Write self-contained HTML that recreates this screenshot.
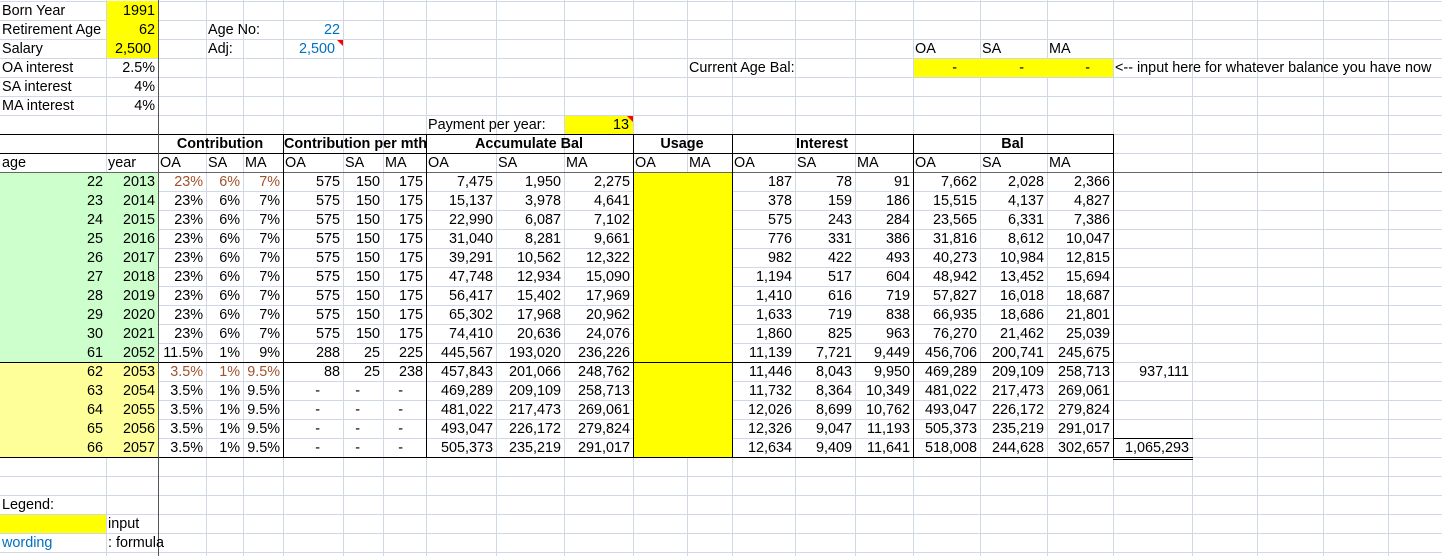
<!DOCTYPE html>
<html><head><meta charset="utf-8"><style>
*{margin:0;padding:0}
body{width:1442px;height:556px;overflow:hidden;position:relative;background:#fff;font-family:"Liberation Sans",Arial,sans-serif;font-size:14.4px;color:#000}
#grid{position:absolute;left:0;top:0;width:1442px;height:556px;background:repeating-linear-gradient(to bottom,#d0d7e5 0,#d0d7e5 1px,transparent 1px,transparent 19px);background-position:0 1px}
.v{position:absolute;top:0;height:556px;width:1px;background:#d0d7e5}
.f{position:absolute}
.b{position:absolute;background:#000}
.r{position:absolute;left:0;height:19px;line-height:19px;display:flex;white-space:nowrap;transform:translateY(1px)}
.r>span{flex:none;box-sizing:border-box;padding:0 3px 0 2px;text-align:right}
.L{text-align:left!important}
.C{text-align:center!important}
.D{padding-right:23px!important}
.B{font-weight:bold}
.br{color:#a0522d}
.bl{color:#0070c0}
.w0{width:106px}.w1{width:52px}.w2{width:48px}.w3{width:37px}.w4{width:40px}.w5{width:60px}.w6{width:40px}.w7{width:43px}.w8{width:70px}.w9{width:68px}.w10{width:69px}.w11{width:54px}.w12{width:45px}.w13{width:63px}.w14{width:60px}.w15{width:58px}.w16{width:67px}.w17{width:67px}.w18{width:66px}.w19{width:79px}
.tri{position:absolute;width:0;height:0;border-left:6px solid transparent;border-top:6px solid #f00}
</style></head><body>
<div id="grid"></div>
<div class="v" style="left:106px"></div><div class="v" style="left:206px"></div><div class="v" style="left:243px"></div><div class="v" style="left:283px"></div><div class="v" style="left:343px"></div><div class="v" style="left:383px"></div><div class="v" style="left:426px"></div><div class="v" style="left:496px"></div><div class="v" style="left:564px"></div><div class="v" style="left:633px"></div><div class="v" style="left:687px"></div><div class="v" style="left:732px"></div><div class="v" style="left:795px"></div><div class="v" style="left:855px"></div><div class="v" style="left:913px"></div><div class="v" style="left:980px"></div><div class="v" style="left:1047px"></div><div class="v" style="left:1113px"></div><div class="v" style="left:1192px"></div><div class="v" style="left:1257px"></div><div class="v" style="left:1323px"></div><div class="v" style="left:1388px"></div>

<div class="f" style="left:107px;top:1px;width:51px;height:57px;background:#ffff00"></div>
<div class="f" style="left:565px;top:116px;width:68px;height:18px;background:#ffff00"></div>
<div class="f" style="left:634px;top:173px;width:98px;height:284px;background:#ffff00"></div>
<div class="f" style="left:914px;top:59px;width:199px;height:18px;background:#ffff00"></div>
<div class="f" style="left:0;top:515px;width:106px;height:18px;background:#ffff00"></div>
<div class="f" style="left:0;top:173px;width:158px;height:189px;background:#ccffcc"></div>
<div class="f" style="left:0;top:363px;width:158px;height:94px;background:#ffff99"></div>

<div class="b" style="left:0;top:134px;width:1113px;height:1px"></div>
<div class="b" style="left:0;top:153px;width:1113px;height:1px"></div>
<div class="b" style="left:0;top:172px;width:1442px;height:1px;background:#666"></div>
<div class="b" style="left:0;top:362px;width:1113px;height:1px"></div>
<div class="b" style="left:0;top:457px;width:1113px;height:1px"></div>
<div class="b" style="left:158px;top:0;width:1px;height:556px;background:#555"></div>
<div class="b" style="left:283px;top:134px;width:1px;height:324px"></div>
<div class="b" style="left:426px;top:134px;width:1px;height:324px"></div>
<div class="b" style="left:633px;top:134px;width:1px;height:324px"></div>
<div class="b" style="left:732px;top:134px;width:1px;height:324px"></div>
<div class="b" style="left:913px;top:134px;width:1px;height:324px"></div>
<div class="b" style="left:1113px;top:134px;width:1px;height:324px"></div>
<div class="b" style="left:1113px;top:438px;width:80px;height:1px"></div>
<div class="b" style="left:1113px;top:457px;width:80px;height:1px"></div>
<div class="b" style="left:1113px;top:459px;width:80px;height:1px"></div>
<div class="tri" style="left:337px;top:40px"></div>
<div class="tri" style="left:627px;top:116px"></div>

<div class="r" style="top:1px"><span class="w0 L">Born Year</span><span class="w1">1991</span></div>
<div class="r" style="top:20px"><span class="w0 L">Retirement Age</span><span class="w1">62</span><span class="w2"></span><span class="w3 L" style="width:77px">Age No:</span><span class="w5 bl">22</span></div>
<div class="r" style="top:39px"><span class="w0 L">Salary</span><span class="w1" style="padding-right:7px">2,500</span><span class="w2"></span><span class="w3 L" style="width:77px">Adj:</span><span class="w5 bl" style="padding-right:8px">2,500</span></div>
<div class="r" style="top:39px;left:913px"><span class="w16 L">OA</span><span class="w17 L">SA</span><span class="w18 L">MA</span></div>
<div class="r" style="top:58px"><span class="w0 L">OA interest</span><span class="w1">2.5%</span></div>
<div class="r" style="top:58px;left:687px"><span class="L" style="width:226px">Current Age Bal:</span><span class="w16 D">-</span><span class="w17 D">-</span><span class="w18 D">-</span><span class="L">&lt;-- input here for whatever balance you have now</span></div>
<div class="r" style="top:77px"><span class="w0 L">SA interest</span><span class="w1">4%</span></div>
<div class="r" style="top:96px"><span class="w0 L">MA interest</span><span class="w1">4%</span></div>
<div class="r" style="top:115px;left:426px"><span class="L" style="width:138px">Payment per year:</span><span class="w10" style="padding-right:4px">13</span></div>
<div class="r B" style="top:134px;left:158px"><span class="C" style="width:125px">Contribution</span><span class="L" style="width:143px;overflow:hidden;padding-left:1px">Contribution per mth</span><span class="C" style="width:207px">Accumulate Bal</span><span class="C" style="width:99px">Usage</span><span class="C" style="width:181px">Interest</span><span class="C" style="width:200px">Bal</span></div>
<div class="r" style="top:153px"><span class="w0 L">age</span><span class="w1 L">year</span><span class="w2 L">OA</span><span class="w3 L">SA</span><span class="w4 L">MA</span><span class="w5 L">OA</span><span class="w6 L">SA</span><span class="w7 L">MA</span><span class="w8 L">OA</span><span class="w9 L">SA</span><span class="w10 L">MA</span><span class="w11 L">OA</span><span class="w12 L">MA</span><span class="w13 L">OA</span><span class="w14 L">SA</span><span class="w15 L">MA</span><span class="w16 L">OA</span><span class="w17 L">SA</span><span class="w18 L">MA</span></div>

<div class="r" style="top:172px"><span class="w0">22</span><span class="w1">2013</span><span class="w2 br">23%</span><span class="w3 br">6%</span><span class="w4 br">7%</span><span class="w5">575</span><span class="w6">150</span><span class="w7">175</span><span class="w8">7,475</span><span class="w9">1,950</span><span class="w10">2,275</span><span class="w11"></span><span class="w12"></span><span class="w13">187</span><span class="w14">78</span><span class="w15">91</span><span class="w16">7,662</span><span class="w17">2,028</span><span class="w18">2,366</span></div>
<div class="r" style="top:191px"><span class="w0">23</span><span class="w1">2014</span><span class="w2">23%</span><span class="w3">6%</span><span class="w4">7%</span><span class="w5">575</span><span class="w6">150</span><span class="w7">175</span><span class="w8">15,137</span><span class="w9">3,978</span><span class="w10">4,641</span><span class="w11"></span><span class="w12"></span><span class="w13">378</span><span class="w14">159</span><span class="w15">186</span><span class="w16">15,515</span><span class="w17">4,137</span><span class="w18">4,827</span></div>
<div class="r" style="top:210px"><span class="w0">24</span><span class="w1">2015</span><span class="w2">23%</span><span class="w3">6%</span><span class="w4">7%</span><span class="w5">575</span><span class="w6">150</span><span class="w7">175</span><span class="w8">22,990</span><span class="w9">6,087</span><span class="w10">7,102</span><span class="w11"></span><span class="w12"></span><span class="w13">575</span><span class="w14">243</span><span class="w15">284</span><span class="w16">23,565</span><span class="w17">6,331</span><span class="w18">7,386</span></div>
<div class="r" style="top:229px"><span class="w0">25</span><span class="w1">2016</span><span class="w2">23%</span><span class="w3">6%</span><span class="w4">7%</span><span class="w5">575</span><span class="w6">150</span><span class="w7">175</span><span class="w8">31,040</span><span class="w9">8,281</span><span class="w10">9,661</span><span class="w11"></span><span class="w12"></span><span class="w13">776</span><span class="w14">331</span><span class="w15">386</span><span class="w16">31,816</span><span class="w17">8,612</span><span class="w18">10,047</span></div>
<div class="r" style="top:248px"><span class="w0">26</span><span class="w1">2017</span><span class="w2">23%</span><span class="w3">6%</span><span class="w4">7%</span><span class="w5">575</span><span class="w6">150</span><span class="w7">175</span><span class="w8">39,291</span><span class="w9">10,562</span><span class="w10">12,322</span><span class="w11"></span><span class="w12"></span><span class="w13">982</span><span class="w14">422</span><span class="w15">493</span><span class="w16">40,273</span><span class="w17">10,984</span><span class="w18">12,815</span></div>
<div class="r" style="top:267px"><span class="w0">27</span><span class="w1">2018</span><span class="w2">23%</span><span class="w3">6%</span><span class="w4">7%</span><span class="w5">575</span><span class="w6">150</span><span class="w7">175</span><span class="w8">47,748</span><span class="w9">12,934</span><span class="w10">15,090</span><span class="w11"></span><span class="w12"></span><span class="w13">1,194</span><span class="w14">517</span><span class="w15">604</span><span class="w16">48,942</span><span class="w17">13,452</span><span class="w18">15,694</span></div>
<div class="r" style="top:286px"><span class="w0">28</span><span class="w1">2019</span><span class="w2">23%</span><span class="w3">6%</span><span class="w4">7%</span><span class="w5">575</span><span class="w6">150</span><span class="w7">175</span><span class="w8">56,417</span><span class="w9">15,402</span><span class="w10">17,969</span><span class="w11"></span><span class="w12"></span><span class="w13">1,410</span><span class="w14">616</span><span class="w15">719</span><span class="w16">57,827</span><span class="w17">16,018</span><span class="w18">18,687</span></div>
<div class="r" style="top:305px"><span class="w0">29</span><span class="w1">2020</span><span class="w2">23%</span><span class="w3">6%</span><span class="w4">7%</span><span class="w5">575</span><span class="w6">150</span><span class="w7">175</span><span class="w8">65,302</span><span class="w9">17,968</span><span class="w10">20,962</span><span class="w11"></span><span class="w12"></span><span class="w13">1,633</span><span class="w14">719</span><span class="w15">838</span><span class="w16">66,935</span><span class="w17">18,686</span><span class="w18">21,801</span></div>
<div class="r" style="top:324px"><span class="w0">30</span><span class="w1">2021</span><span class="w2">23%</span><span class="w3">6%</span><span class="w4">7%</span><span class="w5">575</span><span class="w6">150</span><span class="w7">175</span><span class="w8">74,410</span><span class="w9">20,636</span><span class="w10">24,076</span><span class="w11"></span><span class="w12"></span><span class="w13">1,860</span><span class="w14">825</span><span class="w15">963</span><span class="w16">76,270</span><span class="w17">21,462</span><span class="w18">25,039</span></div>
<div class="r" style="top:343px"><span class="w0">61</span><span class="w1">2052</span><span class="w2">11.5%</span><span class="w3">1%</span><span class="w4">9%</span><span class="w5">288</span><span class="w6">25</span><span class="w7">225</span><span class="w8">445,567</span><span class="w9">193,020</span><span class="w10">236,226</span><span class="w11"></span><span class="w12"></span><span class="w13">11,139</span><span class="w14">7,721</span><span class="w15">9,449</span><span class="w16">456,706</span><span class="w17">200,741</span><span class="w18">245,675</span></div>
<div class="r" style="top:362px"><span class="w0">62</span><span class="w1">2053</span><span class="w2 br">3.5%</span><span class="w3 br">1%</span><span class="w4 br">9.5%</span><span class="w5">88</span><span class="w6">25</span><span class="w7">238</span><span class="w8">457,843</span><span class="w9">201,066</span><span class="w10">248,762</span><span class="w11"></span><span class="w12"></span><span class="w13">11,446</span><span class="w14">8,043</span><span class="w15">9,950</span><span class="w16">469,289</span><span class="w17">209,109</span><span class="w18">258,713</span><span class="w19">937,111</span></div>
<div class="r" style="top:381px"><span class="w0">63</span><span class="w1">2054</span><span class="w2">3.5%</span><span class="w3">1%</span><span class="w4">9.5%</span><span class="w5 D">-</span><span class="w6 D">-</span><span class="w7 D">-</span><span class="w8">469,289</span><span class="w9">209,109</span><span class="w10">258,713</span><span class="w11"></span><span class="w12"></span><span class="w13">11,732</span><span class="w14">8,364</span><span class="w15">10,349</span><span class="w16">481,022</span><span class="w17">217,473</span><span class="w18">269,061</span></div>
<div class="r" style="top:400px"><span class="w0">64</span><span class="w1">2055</span><span class="w2">3.5%</span><span class="w3">1%</span><span class="w4">9.5%</span><span class="w5 D">-</span><span class="w6 D">-</span><span class="w7 D">-</span><span class="w8">481,022</span><span class="w9">217,473</span><span class="w10">269,061</span><span class="w11"></span><span class="w12"></span><span class="w13">12,026</span><span class="w14">8,699</span><span class="w15">10,762</span><span class="w16">493,047</span><span class="w17">226,172</span><span class="w18">279,824</span></div>
<div class="r" style="top:419px"><span class="w0">65</span><span class="w1">2056</span><span class="w2">3.5%</span><span class="w3">1%</span><span class="w4">9.5%</span><span class="w5 D">-</span><span class="w6 D">-</span><span class="w7 D">-</span><span class="w8">493,047</span><span class="w9">226,172</span><span class="w10">279,824</span><span class="w11"></span><span class="w12"></span><span class="w13">12,326</span><span class="w14">9,047</span><span class="w15">11,193</span><span class="w16">505,373</span><span class="w17">235,219</span><span class="w18">291,017</span></div>
<div class="r" style="top:438px"><span class="w0">66</span><span class="w1">2057</span><span class="w2">3.5%</span><span class="w3">1%</span><span class="w4">9.5%</span><span class="w5 D">-</span><span class="w6 D">-</span><span class="w7 D">-</span><span class="w8">505,373</span><span class="w9">235,219</span><span class="w10">291,017</span><span class="w11"></span><span class="w12"></span><span class="w13">12,634</span><span class="w14">9,409</span><span class="w15">11,641</span><span class="w16">518,008</span><span class="w17">244,628</span><span class="w18">302,657</span><span class="w19">1,065,293</span></div>

<div class="r" style="top:495px"><span class="w0 L">Legend:</span></div>
<div class="r" style="top:514px"><span class="w0"></span><span class="w1 L">input</span></div>
<div class="r" style="top:533px"><span class="w0 L bl">wording</span><span class="w1 L">: formula</span></div>
</body></html>
